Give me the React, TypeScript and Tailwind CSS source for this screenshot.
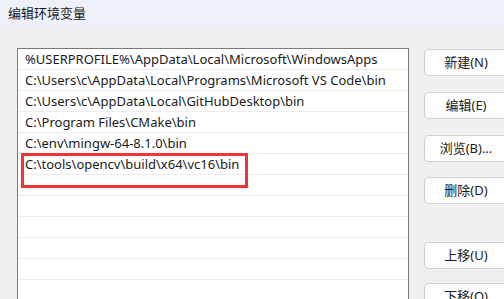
const paths = [
  "%USERPROFILE%\\AppData\\Local\\Microsoft\\WindowsApps",
  "C:\\Users\\c\\AppData\\Local\\Programs\\Microsoft VS Code\\bin",
  "C:\\Users\\c\\AppData\\Local\\GitHubDesktop\\bin",
  "C:\\Program Files\\CMake\\bin",
  "C:\\env\\mingw-64-8.1.0\\bin",
  "C:\\tools\\opencv\\build\\x64\\vc16\\bin",
  "",
  "",
  "",
  "",
  "",
  "",
];

const buttons = [
  { label: "新建(N)", mt: "mt-[1px]" },
  { label: "编辑(E)", mt: "mt-[16px]" },
  { label: "浏览(B)...", mt: "mt-[16px]" },
  { label: "删除(D)", mt: "mt-[15px]" },
  { label: "上移(U)", mt: "mt-[38px]" },
  { label: "下移(O)", mt: "mt-[14px]" },
];

export default function App() {
  return (
    <div
      className="w-[504px] h-[299px] overflow-hidden bg-[#f0f0f0] flex flex-col text-[13px] text-[#1a1a1a]"
      style={{ fontFamily: '"Noto Sans", "Noto Sans CJK SC", sans-serif' }}
    >
      <div className="h-[27px] shrink-0 bg-[#eef2f8] pl-[8px] flex items-center leading-none">
        编辑环境变量
      </div>
      <div className="flex pl-[17px] pt-[21px]">
        <div className="relative w-[392px] h-[260px] shrink-0 bg-white border border-[#7a7a7a] text-[13px]">
          {paths.map((p, i) => (
            <div
              key={i}
              className="h-[21px] border-b border-[#ececec] pl-[7px] pt-[1px] flex items-center leading-none whitespace-nowrap"
            >
              {p}
            </div>
          ))}
          <div className="absolute left-[3px] top-[104px] w-[227px] h-[35px] border-[3px] border-[#ee3434]" />
        </div>
        <div className="ml-[15px] w-[84px] shrink-0 flex flex-col">
          {buttons.map((b) => (
            <div
              key={b.label}
              className={`${b.mt} h-[27px] shrink-0 rounded-[4px] border border-[#d0d0d0] bg-[#fdfdfd] flex items-center justify-center leading-none`}
            >
              {b.label}
            </div>
          ))}
        </div>
      </div>
    </div>
  );
}
